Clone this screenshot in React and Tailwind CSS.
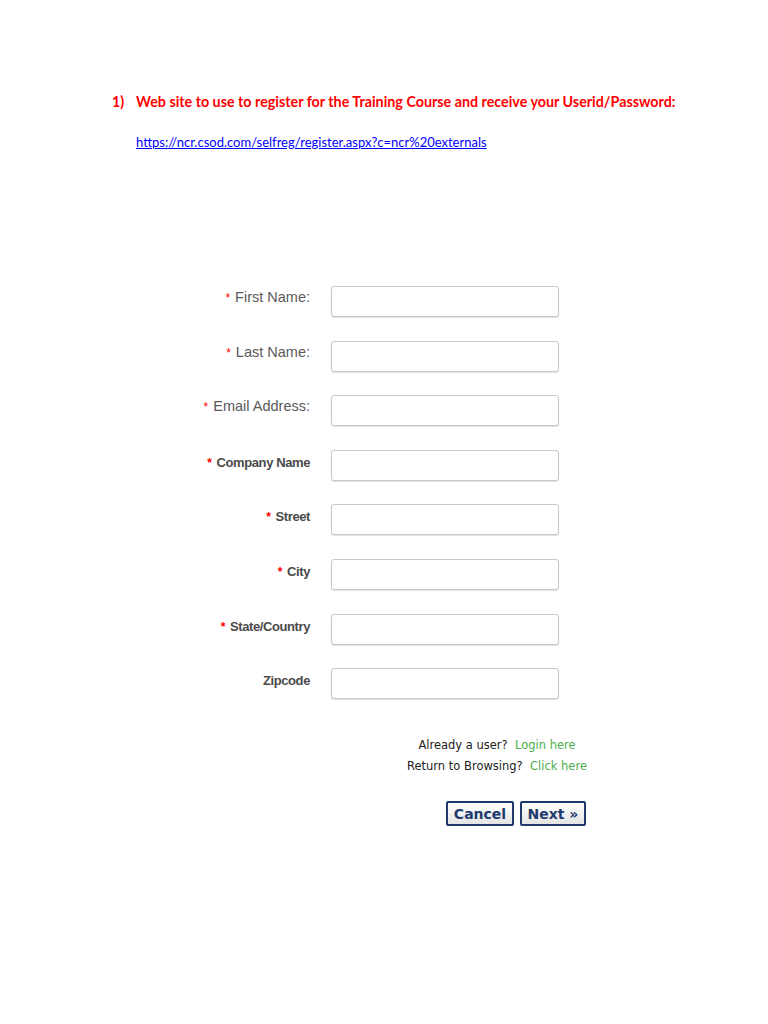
import React from "react";

const fields = [
  { label: "First Name:", req: true, bold: false },
  { label: "Last Name:", req: true, bold: false },
  { label: "Email Address:", req: true, bold: false },
  { label: "Company Name", req: true, bold: true },
  { label: "Street", req: true, bold: true },
  { label: "City", req: true, bold: true },
  { label: "State/Country", req: true, bold: true },
  { label: "Zipcode", req: false, bold: true },
];

export default function App() {
  return (
    <div className="w-[768px] h-[1024px] bg-white overflow-hidden" style={{ fontFamily: "'Liberation Sans', Arial, sans-serif" }}>
      <div className="pt-[92px] pl-[112px]">
        <div className="text-[#ff0000] font-bold text-[14.3px] leading-[20px]" style={{ fontFamily: "Lato, sans-serif" }}>
          <span className="inline-block w-[24px]">1)</span>Web site to use to register for the Training Course and receive your Userid/Password:
        </div>
        <div className="mt-[18px] pl-[24px] h-[21px]">
          <a className="text-[#0000ff] underline text-[13px] leading-[18px]" style={{ fontFamily: "Lato, sans-serif" }}>
            https://ncr.csod.com/selfreg/register.aspx?c=ncr%20externals
          </a>
        </div>
      </div>

      <div className="mt-[135px] flex flex-col gap-[23.6px]">
        {fields.map((f) => (
          <div key={f.label} className="flex items-start">
            <div className={`w-[310px] text-right ${f.bold ? "font-bold text-[13px] text-[#4a4a4a] tracking-[-0.4px] pt-[3px]" : "text-[14.5px] text-[#5a5a5a] pt-[1px]"}`}>
              {f.req && <span className="text-[#ff0000] mr-[5px] text-[12px]">*</span>}
              {f.label}
            </div>
            <div className="ml-[21px] w-[228px] h-[31px] rounded-[3px] border border-[#c8c8c8] shadow-[0_1px_1px_rgba(0,0,0,0.12)] bg-white" />
          </div>
        ))}
      </div>

      <div className="mt-[36px] w-[994px] flex flex-col items-center leading-[21px] text-[#222]" style={{ fontFamily: "'DejaVu Sans', Verdana, sans-serif", fontSize: "11.5px" }}>
        <div>
          Already a user?&nbsp;&nbsp;<span className="text-[#4cae4c]">Login here</span>
        </div>
        <div>
          Return to Browsing?&nbsp;&nbsp;<span className="text-[#4cae4c]">Click here</span>
        </div>
      </div>

      <div className="mt-[24px] flex gap-[6px] pl-[446px]">
        <button className="w-[68px] h-[25px] border-2 border-[#1f3a6e] rounded-[2px] bg-gradient-to-b from-white to-[#e4e4e4] text-[#1f3a6e] font-bold text-[14px] leading-none" style={{ fontFamily: "'DejaVu Sans', Verdana, sans-serif" }}>
          Cancel
        </button>
        <button className="w-[66px] h-[25px] border-2 border-[#1f3a6e] rounded-[2px] bg-gradient-to-b from-white to-[#e4e4e4] text-[#1f3a6e] font-bold text-[14px] leading-none" style={{ fontFamily: "'DejaVu Sans', Verdana, sans-serif" }}>
          Next »
        </button>
      </div>
    </div>
  );
}
